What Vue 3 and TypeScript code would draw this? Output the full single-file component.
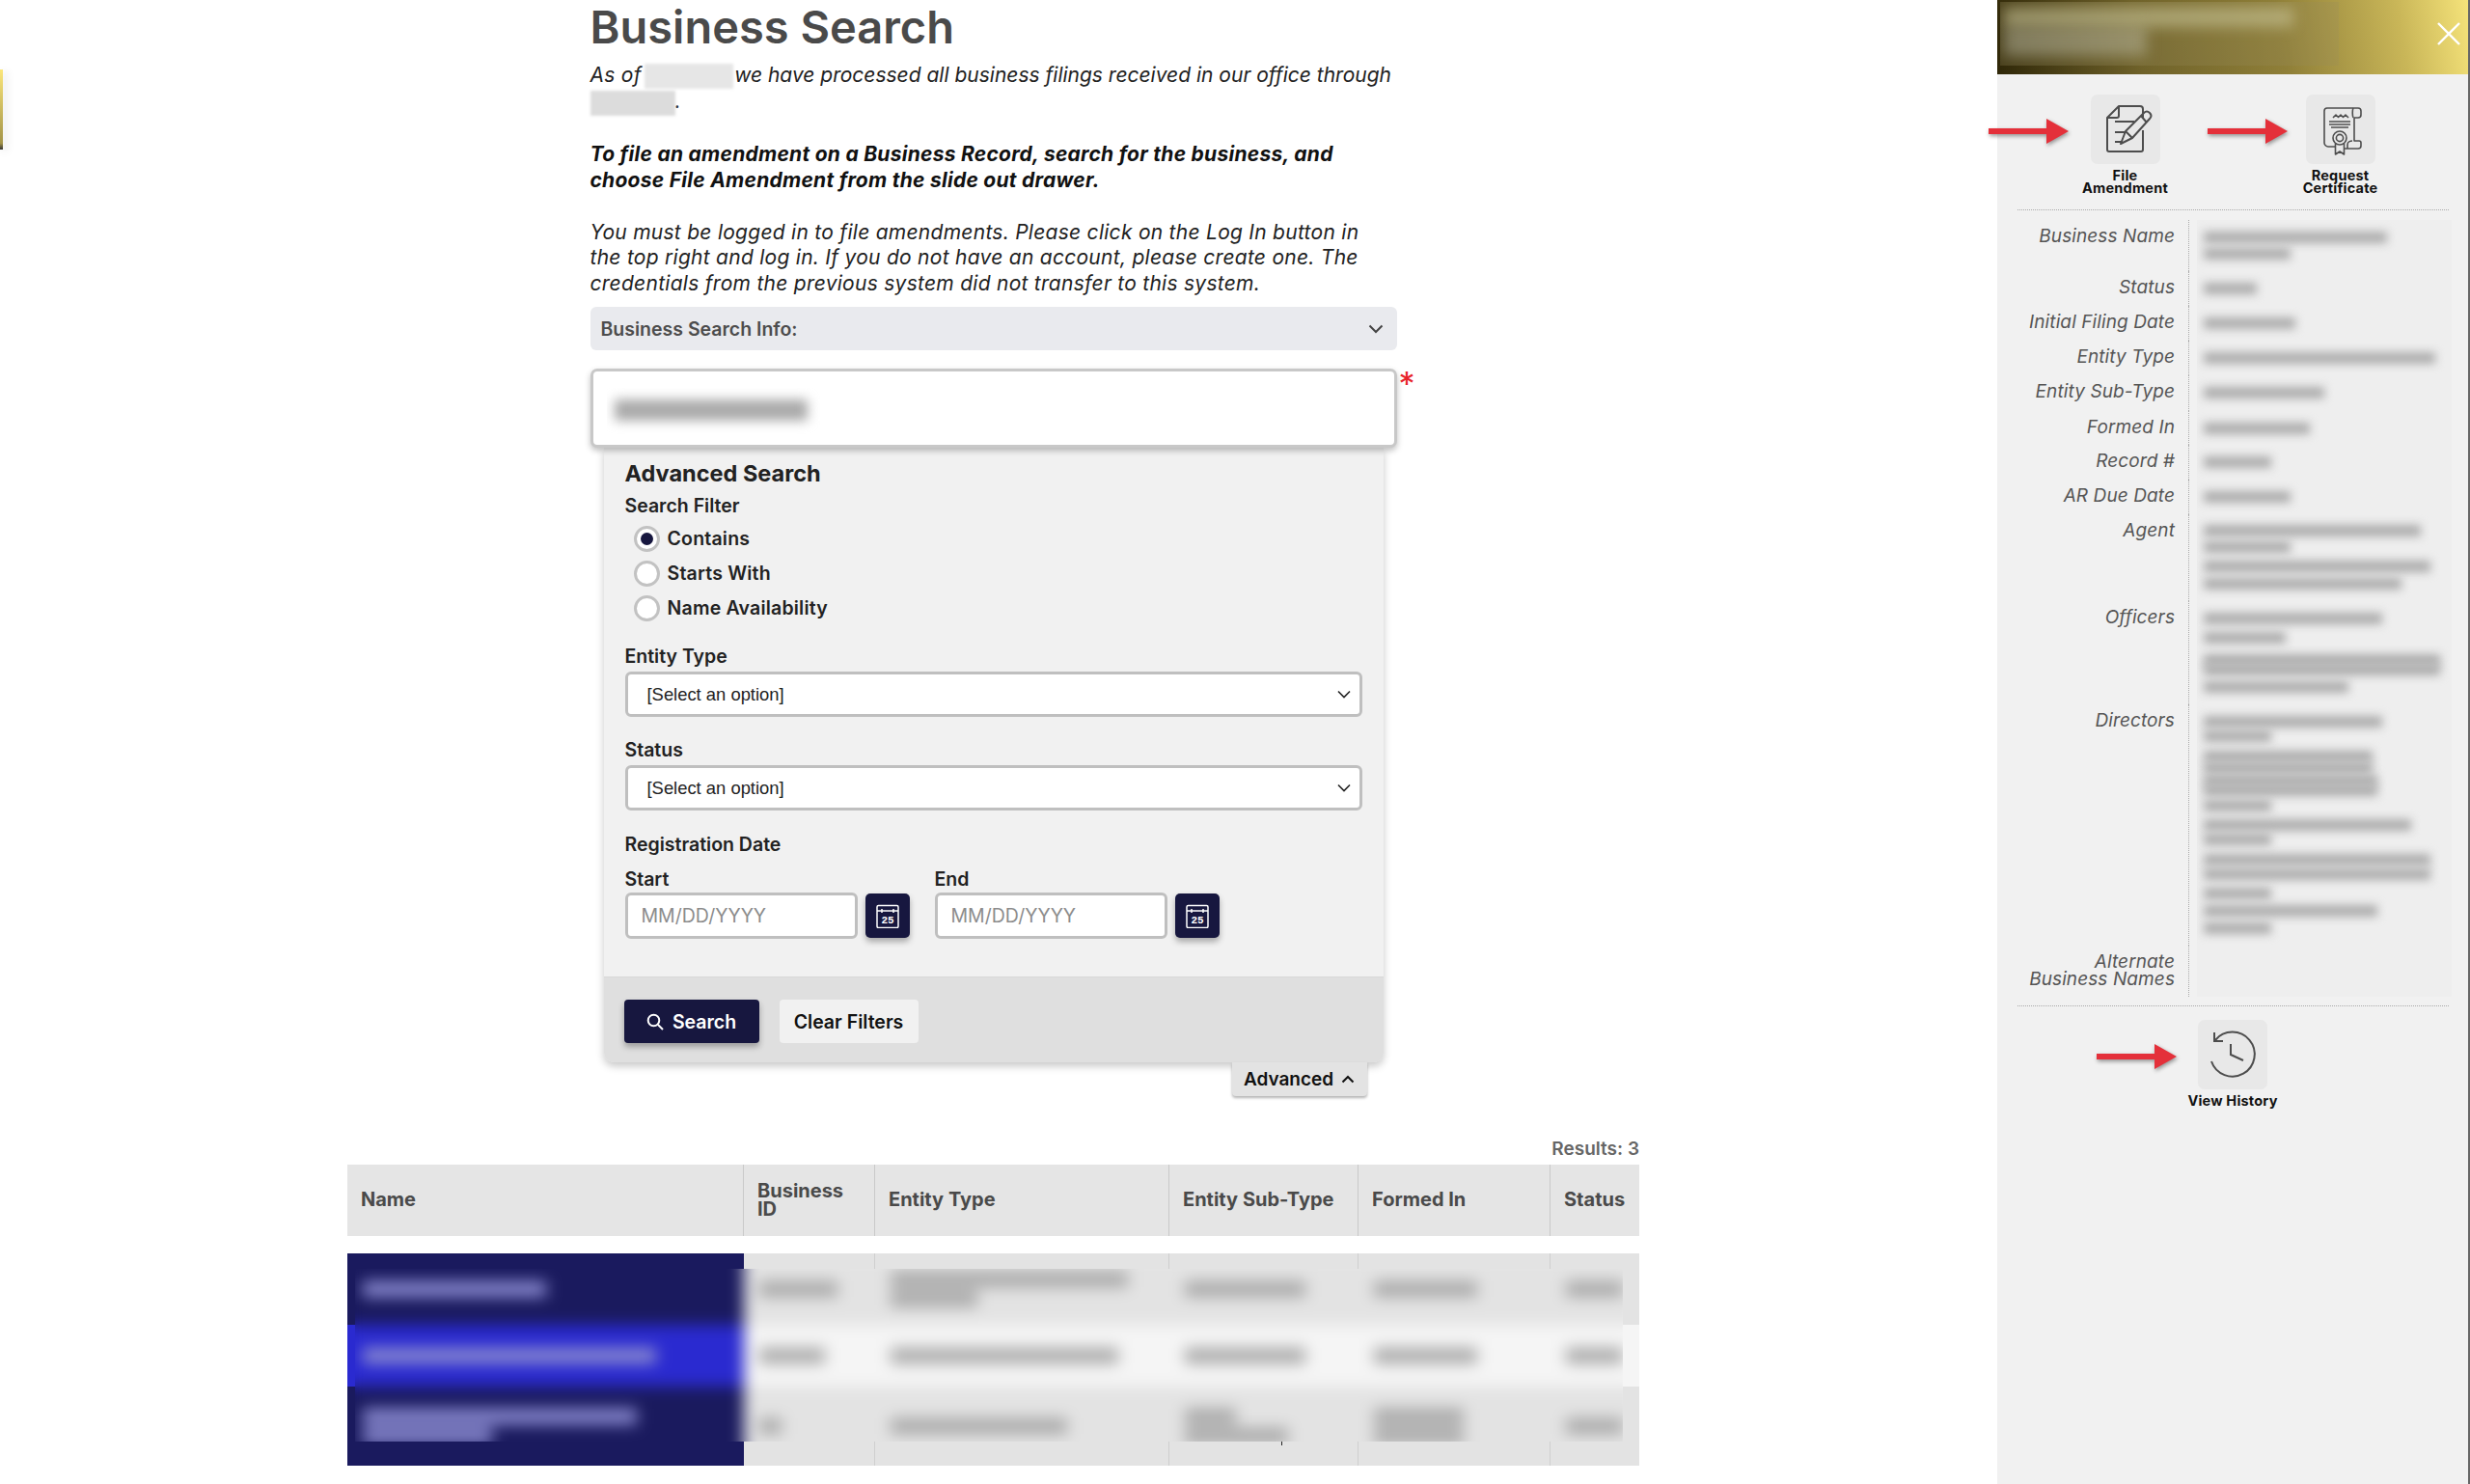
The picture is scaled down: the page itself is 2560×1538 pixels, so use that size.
<script setup lang="ts">
interface Bar { w: number; y: number }
interface Detail { label: string[]; h: number; bars: Bar[] }

const details: Detail[] = [
  { label: ['Business Name'], h: 53, bars: [{ w: 190, y: 18 }, { w: 90, y: 35 }] },
  { label: ['Status'], h: 36, bars: [{ w: 55, y: 18 }] },
  { label: ['Initial Filing Date'], h: 36, bars: [{ w: 95, y: 18 }] },
  { label: ['Entity Type'], h: 36, bars: [{ w: 240, y: 18 }] },
  { label: ['Entity Sub-Type'], h: 37, bars: [{ w: 125, y: 18 }] },
  { label: ['Formed In'], h: 35, bars: [{ w: 110, y: 18 }] },
  { label: ['Record #'], h: 36, bars: [{ w: 70, y: 18 }] },
  { label: ['AR Due Date'], h: 36, bars: [{ w: 90, y: 18 }] },
  { label: ['Agent'], h: 90, bars: [{ w: 225, y: 17 }, { w: 90, y: 34 }, { w: 235, y: 54 }, { w: 205, y: 72 }] },
  { label: ['Officers'], h: 107, bars: [{ w: 185, y: 18 }, { w: 85, y: 38 }, { w: 245, y: 61 }, { w: 245, y: 71 }, { w: 150, y: 89 }] },
  {
    label: ['Directors'],
    h: 250,
    bars: [
      { w: 185, y: 18 }, { w: 70, y: 33 }, { w: 175, y: 54 }, { w: 175, y: 66 }, { w: 180, y: 79 },
      { w: 180, y: 89 }, { w: 70, y: 105 }, { w: 215, y: 125 }, { w: 70, y: 140 }, { w: 235, y: 161 },
      { w: 235, y: 176 }, { w: 70, y: 196 }, { w: 180, y: 214 }, { w: 70, y: 232 }
    ]
  },
  { label: ['Alternate', 'Business Names'], h: 53, bars: [] }
]

function barStyle(bars: Bar[], i: number) {
  const prevEnd = i === 0 ? 0 : bars[i - 1].y + 6
  return { width: bars[i].w + 'px', marginTop: bars[i].y - 6 - prevEnd + 'px' }
}

const columns = [
  { name: 'Name', w: 411 },
  { name: 'Business ID', w: 136 },
  { name: 'Entity Type', w: 305 },
  { name: 'Entity Sub-Type', w: 196 },
  { name: 'Formed In', w: 199 },
  { name: 'Status', w: 92 }
]

interface Row { h: number; cls: string; cells: number[][] }
const rows: Row[] = [
  { h: 74, cls: 'odd', cells: [[190], [81], [246, 90], [125], [107], [59]] },
  { h: 64, cls: 'even', cells: [[304], [68], [236], [125], [107], [59]] },
  { h: 82, cls: 'odd', cells: [[284, 134], [23], [183], [53, 107], [93, 93], [59]] }
]
</script>

<template>
  <div class="page">
    <div class="sliver"></div>

    <main class="main">
      <section class="intro">
        <h1 class="title">Business Search</h1>
        <p class="para">
          As of <span class="redact r1"></span> <span class="tight">we have processed all business filings received in our office through</span><br />
          <span class="redact r2"></span>.
        </p>
        <p class="para strong">
          To file an amendment on a Business Record, search for the business, and<br />
          choose File Amendment from the slide out drawer.
        </p>
        <p class="para">
          You must be logged in to file amendments. Please click on the Log In button in<br />
          the top right and log in. If you do not have an account, please create one. The<br />
          credentials from the previous system did not transfer to this system.
        </p>
        <div class="accordion">
          <span>Business Search Info:</span>
          <svg class="acc-chev" width="16" height="10" viewBox="0 0 16 10"><path d="M1.500 1.500 8 8l6.500-6.500" fill="none" stroke="#444" stroke-width="2" /></svg>
        </div>
        <div class="search-box">
          <div class="search-blur"><div class="search-bar"></div></div>
          <span class="asterisk">*</span>
        </div>
      </section>

      <section class="panel">
        <div class="panel-body">
          <h2 class="adv-title">Advanced Search</h2>
          <div class="label filter-label">Search Filter</div>
          <div class="radios">
            <div class="radio-row"><span class="radio on"></span>Contains</div>
            <div class="radio-row"><span class="radio"></span>Starts With</div>
            <div class="radio-row"><span class="radio"></span>Name Availability</div>
          </div>
          <div class="label type-label">Entity Type</div>
          <div class="select">
            <span>[Select an option]</span>
            <svg width="14" height="9" viewBox="0 0 14 9"><path d="M1 1.500 7 7.500l6-6" fill="none" stroke="#222" stroke-width="1.600" /></svg>
          </div>
          <div class="label status-label">Status</div>
          <div class="select">
            <span>[Select an option]</span>
            <svg width="14" height="9" viewBox="0 0 14 9"><path d="M1 1.500 7 7.500l6-6" fill="none" stroke="#222" stroke-width="1.600" /></svg>
          </div>
          <div class="label reg-label">Registration Date</div>
          <div class="dates">
            <div v-for="d in ['Start', 'End']" :key="d" class="date">
              <div class="label">{{ d }}</div>
              <div class="date-row">
                <input class="date-input" placeholder="MM/DD/YYYY" />
                <button class="cal-btn" type="button" :aria-label="d + ' date'">
                  <svg width="26" height="26" viewBox="0 0 26 26" fill="none" stroke="#fff" stroke-width="1.500">
                    <rect x="2" y="2.500" width="22" height="23" rx="1.500" />
                    <path d="M2 8h22M7 6v4M19 6v4" />
                    <text x="13" y="21" class="cal-text" text-anchor="middle">25</text>
                  </svg>
                </button>
              </div>
            </div>
          </div>
        </div>
        <div class="panel-foot">
          <button class="btn primary" type="button">
            <svg width="18" height="18" viewBox="0 0 18 18" fill="none" stroke="#fff" stroke-width="2"><circle cx="7.500" cy="7.500" r="5.800" /><path d="m12 12 5 5" /></svg>
            Search
          </button>
          <button class="btn ghost" type="button">Clear Filters</button>
        </div>
      </section>
      <div class="tab-row">
        <div class="adv-tab">
          Advanced
          <svg width="14" height="9" viewBox="0 0 14 9"><path d="M1.500 7.500 7 2l5.500 5.500" fill="none" stroke="#111" stroke-width="2" /></svg>
        </div>
      </div>

      <section class="results">
        <div class="count">Results: 3</div>
        <div class="thead">
          <div v-for="c in columns" :key="c.name" class="th" :style="{ width: c.w + 'px' }">
            <span :class="{ narrow: c.name === 'Business ID' }">{{ c.name }}</span>
          </div>
        </div>
        <div class="tbody">
          <div v-for="(r, i) in rows" :key="i" class="tr" :class="r.cls" :style="{ height: r.h + 'px' }">
            <div v-for="(c, j) in columns" :key="j" class="td" :style="{ width: c.w + 'px' }"></div>
          </div>
          <div class="blur-window">
            <div class="blur-inner">
              <div v-for="(r, i) in rows" :key="i" class="tr" :class="r.cls" :style="{ height: r.h + 'px' }">
                <div v-for="(c, j) in columns" :key="j" class="td blurred-cell" :style="{ width: c.w + 'px' }">
                  <div v-for="(w, k) in r.cells[j]" :key="k" class="cell-bar" :style="{ width: w + 'px' }"></div>
                </div>
              </div>
            </div>
          </div>
          <div class="tick"></div>
        </div>
      </section>
    </main>

    <aside class="drawer">
      <header class="drawer-head">
        <div class="head-blur">
          <div class="head-bar hb1"></div>
          <div class="head-bar hb2"></div>
        </div>
        <svg class="close" width="26" height="26" viewBox="0 0 26 26"><path d="M2 2l22 22M24 2 2 24" stroke="#fff" stroke-width="2.400" fill="none" /></svg>
      </header>

      <div class="actions">
        <div class="action">
          <div class="tile">
            <svg class="arrow a1" width="86" height="30" viewBox="0 0 86 30"><path d="M1 12h60V2l23 13-23 13V18H1z" /></svg>
            <svg width="72" height="72" viewBox="0 0 72 72" fill="none" stroke="#4d4d4d" stroke-width="2" stroke-linejoin="round">
              <path d="M54 37v20a2 2 0 0 1-2 2H19a2 2 0 0 1-2-2V24L29 12h22a3 3 0 0 1 3 3v9" />
              <path d="M17 24h10a2 2 0 0 0 2-2V12" />
              <path d="M25 28h20M25 39h12M25 49h6" />
              <path d="m31 51 5-13 19-19c2-2 4-2 6 0s2 4 0 6L43 45zM36 38l7 7M52 22l6 7" />
            </svg>
          </div>
          <div class="action-label">File<br />Amendment</div>
        </div>
        <div class="action">
          <div class="tile">
            <svg class="arrow a2" width="86" height="30" viewBox="0 0 86 30"><path d="M1 12h60V2l23 13-23 13V18H1z" /></svg>
            <svg width="72" height="72" viewBox="0 0 72 72" fill="none" stroke="#4d4d4d" stroke-width="1.600" stroke-linejoin="round">
              <path d="M30 54h-7c-2 0-4-2-4-4V17c0-2 1-3 3-3h32c2 0 3 1 3 3v4c0 2-1 3-3 3h-4v24h5c1 0 2 1 2 2v3c0 2-1 3-3 3H40" />
              <path d="M49 14c-1 2-1 8 0 10M48 48c-2 0-5 1-5 4v4" />
              <path d="m28 24 3-3 2.500 2.500L36 21l2.500 2.500L41 21l3 3" />
              <path d="M24 28h22M24 31h22M26 34h18" />
              <circle cx="35" cy="45" r="7" /><circle cx="35" cy="45" r="3.600" />
              <path d="M30.500 51v11l4.500-3 4.500 3V51" />
            </svg>
          </div>
          <div class="action-label">Request<br />Certificate</div>
        </div>
      </div>

      <div class="rule"></div>

      <div class="details">
        <div v-for="d in details" :key="d.label[0]" class="detail" :style="{ height: d.h + 'px' }">
          <div class="detail-label">
            <template v-for="(l, i) in d.label" :key="l"><br v-if="i > 0" />{{ l }}</template>
          </div>
          <div class="detail-value">
            <div v-for="(b, i) in d.bars" :key="i" class="value-bar" :style="barStyle(d.bars, i)"></div>
          </div>
        </div>
      </div>

      <div class="rule history-rule"></div>

      <div class="history">
        <div class="tile">
          <svg class="arrow a3" width="86" height="30" viewBox="0 0 86 30"><path d="M1 12h60V2l23 13-23 13V18H1z" /></svg>
          <svg width="72" height="72" viewBox="0 0 72 72" fill="none" stroke="#4d4d4d" stroke-width="2">
            <path d="M18 21a23 23 0 1 1-4 22" />
            <path d="M17 13v9h9" />
            <path d="M34 25v11l13 6" />
          </svg>
        </div>
        <div class="action-label single">View History</div>
      </div>
    </aside>
  </div>
</template>

<style>
html, body { margin: 0; background: #fff; }
</style>

<style scoped>
* { box-sizing: border-box; }
.page {
  position: relative;
  display: flex;
  width: 2560px;
  height: 1538px;
  overflow: hidden;
  background: #fff;
  font-family: Inter, "Noto Sans", sans-serif;
  color: #222;
}
.sliver {
  position: absolute;
  left: 0;
  top: 72px;
  width: 3px;
  height: 83px;
  background: linear-gradient(#fbe67a, #a39448 92%, #333);
  box-shadow: 3px 2px 8px rgba(0, 0, 0, .15);
}
.main {
  width: 2059px;
  display: flex;
  flex-direction: column;
  align-items: center;
}
.intro { width: 836px; }
.title {
  margin: 0 0 9px;
  font-size: 47px;
  line-height: 56px;
  font-weight: 600;
  color: #4a4a4a;
}
.para {
  margin: 0 0 27.500px;
  font-size: 21px;
  line-height: 26.500px;
  letter-spacing: .27px;
  font-style: italic;
  white-space: nowrap;
  color: #222;
}
.tight { letter-spacing: 0; }
.para:nth-of-type(3) { margin-bottom: 11px; }
.strong { font-weight: 700; color: #111; }
.redact {
  display: inline-block;
  height: 26px;
  vertical-align: middle;
  background: #e6e6e6;
  filter: blur(1.500px);
}
.r1 { width: 92px; margin: 0 -5px 0 -3px; }
.r2 { width: 88px; background: #dcdcdc; }
.accordion {
  display: flex;
  align-items: center;
  justify-content: space-between;
  height: 45px;
  padding: 0 14px 0 11px;
  background: #e9eaee;
  border-radius: 6px;
  font-size: 19.500px;
  font-weight: 600;
  color: #4d4d4d;
}
.search-box {
  position: relative;
  height: 82px;
  margin-top: 19px;
  background: #fff;
  border: 3px solid #c8c8c8;
  border-radius: 7px;
  box-shadow: 0 3px 6px rgba(0, 0, 0, .25);
  z-index: 2;
}
.search-blur {
  width: 236px;
  height: 50px;
  margin: 17px 0 0 14px;
  padding: 12px 8px;
  overflow: hidden;
}
.search-bar {
  height: 22px;
  width: 200px;
  background: #aaa;
  filter: blur(6px);
}
.asterisk {
  position: absolute;
  right: -22px;
  top: -7px;
  font-size: 34px;
  line-height: 40px;
  color: #e8232a;
}
.panel {
  width: 808px;
  background: #f1f1f1;
  border-radius: 0 0 10px 10px;
  box-shadow: 0 4px 8px rgba(0, 0, 0, .22);
}
.panel-body {
  height: 548px;
  padding: 14px 22px 0;
}
.adv-title {
  margin: 0;
  font-size: 23.500px;
  line-height: 26px;
  font-weight: 700;
  color: #222;
}
.label {
  font-size: 19.500px;
  line-height: 24px;
  font-weight: 600;
  color: #222;
}
.filter-label { margin-top: 8px; }
.radios { margin: 4px 0 0 9px; }
.radio-row {
  display: flex;
  align-items: center;
  gap: 8px;
  height: 36px;
  font-size: 19.500px;
  letter-spacing: .2px;
  font-weight: 600;
}
.radio {
  position: relative;
  width: 27px;
  height: 27px;
  border: 3px solid #c2c2c2;
  border-radius: 50%;
  background: #fff;
}
.radio.on::after {
  content: "";
  position: absolute;
  left: 4px;
  top: 4px;
  width: 13px;
  height: 13px;
  border-radius: 50%;
  background: #17173f;
}
.type-label { margin: 20px 0 4px; }
.status-label { margin: 22px 0 4px; }
.reg-label { margin-top: 23px; }
.select {
  display: flex;
  align-items: center;
  justify-content: space-between;
  height: 47px;
  padding: 0 9px 0 20px;
  background: #fff;
  border: 3px solid #bfbfbf;
  border-radius: 6px;
  font-family: "Liberation Sans", sans-serif;
  font-size: 18.400px;
  color: #222;
}
.dates {
  display: flex;
  gap: 26px;
  margin-top: 12px;
}
.date-row {
  display: flex;
  align-items: center;
  gap: 8px;
  margin-top: 2px;
}
.date-input {
  width: 241px;
  height: 48px;
  padding: 0 14px;
  border: 3px solid #bfbfbf;
  border-radius: 6px;
  background: #fff;
  font: inherit;
  font-size: 19.500px;
  outline: none;
}
.date-input::placeholder { color: #8c8c8c; opacity: 1; }
.cal-btn {
  display: flex;
  align-items: center;
  justify-content: center;
  width: 46px;
  height: 46px;
  padding: 0;
  border: 0;
  border-radius: 5px;
  background: #17173f;
  box-shadow: 0 4px 6px rgba(0, 0, 0, .3);
}
.cal-text {
  fill: #fff;
  stroke: none;
  font-family: "Liberation Mono", monospace;
  font-size: 11px;
  font-weight: 700;
}
.panel-foot {
  display: flex;
  gap: 21px;
  height: 89px;
  padding: 23px 21px 0;
  background: #dfdfdf;
  border-top: 1px solid #d8d8d8;
  border-radius: 0 0 10px 10px;
}
.btn {
  display: flex;
  align-items: center;
  justify-content: center;
  gap: 9px;
  height: 45px;
  padding: 0;
  border: 0;
  border-radius: 4px;
  font: inherit;
  font-size: 19.500px;
  font-weight: 600;
}
.primary {
  width: 140px;
  background: #17173f;
  color: #fff;
  box-shadow: 0 4px 6px rgba(0, 0, 0, .3);
}
.ghost {
  width: 144px;
  background: #f1f1f1;
  color: #111;
}
.tab-row {
  width: 808px;
  display: flex;
  justify-content: flex-end;
  padding-right: 17px;
}
.adv-tab {
  display: flex;
  align-items: center;
  justify-content: center;
  gap: 8px;
  width: 140px;
  height: 35px;
  background: #e3e3e3;
  border-radius: 0 0 4px 4px;
  box-shadow: 0 2px 3px rgba(0, 0, 0, .3);
  font-size: 19px;
  font-weight: 600;
  color: #111;
}
.results {
  width: 1339px;
  margin-top: 42.500px;
}
.count {
  height: 28px;
  line-height: 24px;
  text-align: right;
  font-size: 19px;
  font-weight: 600;
  color: #666;
}
.thead {
  display: flex;
  height: 74px;
  background: #e5e5e5;
}
.th {
  display: flex;
  align-items: center;
  padding: 0 14px;
  border-right: 1px solid #c9c9c9;
  font-size: 20px;
  line-height: 19px;
  font-weight: 700;
  color: #4a4a4a;
}
.th:last-child { border-right: 0; }
.narrow { width: 90px; }
.tbody {
  position: relative;
  margin-top: 18px;
}
.tr { display: flex; }
.tr.odd .td { background: #e3e3e3; }
.tr.even .td { background: #f5f5f5; }
.tr .td { border-right: 1px solid #cfcfcf; }
.tr .td:last-child { border-right: 0; }
.tr.odd .td:first-child { background: #1a1a5e; border-right: 0; }
.tr.even .td:first-child { background: #2a2ad0; border-right: 0; }
.blur-window {
  position: absolute;
  left: 8px;
  top: 16px;
  right: 17px;
  bottom: 25px;
  overflow: hidden;
}
.blur-inner {
  position: absolute;
  left: -8px;
  top: -16px;
  width: 1339px;
  filter: blur(8px);
}
.blur-inner .td { border-right: 0; }
.blurred-cell {
  display: flex;
  flex-direction: column;
  justify-content: center;
  gap: 4px;
  padding-left: 16px;
}
.cell-bar {
  height: 16px;
  background: #a8a8a8;
}
.td:first-child .cell-bar { background: #8a8ad0; }
.tick {
  position: absolute;
  left: 968px;
  top: 195px;
  width: 1px;
  height: 4px;
  background: #222;
}
.drawer {
  margin-left: auto;
  width: 490px;
  height: 1538px;
  background: #f1f1f1;
  border-right: 2px solid #666;
}
.drawer-head {
  position: relative;
  height: 77px;
  background: linear-gradient(80deg, #2f2708 0%, #6f622a 30%, #8f7f38 60%, #c9b658 85%, #f5e37a 100%);
}
.head-blur {
  position: absolute;
  left: 3px;
  top: 2px;
  width: 351px;
  height: 66px;
  overflow: hidden;
  background: rgba(150, 140, 90, .25);
}
.head-bar {
  position: absolute;
  filter: blur(7px);
}
.hb1 {
  left: 4px;
  top: 6px;
  width: 300px;
  height: 20px;
  background: rgba(200, 195, 150, .6);
}
.hb2 {
  left: 4px;
  top: 26px;
  width: 148px;
  height: 30px;
  background: rgba(190, 190, 170, .45);
}
.close {
  position: absolute;
  right: 7px;
  top: 22px;
}
.actions {
  display: flex;
  padding: 21px 21px 0;
}
.action {
  flex: 1;
  display: flex;
  flex-direction: column;
  align-items: center;
}
.tile {
  position: relative;
  width: 72px;
  height: 72px;
  background: #e8e8e8;
  border-radius: 7px;
}
.tile > svg { display: block; }
.tile > .arrow {
  position: absolute;
  left: -107px;
  top: 23px;
  fill: #e4303a;
  filter: drop-shadow(1px 2px 2px rgba(0, 0, 0, .4));
}
.tile > .a2 { left: -103px; }
.tile > .a3 { left: -106px; }
.action-label {
  margin-top: 5px;
  font-size: 14.500px;
  letter-spacing: .2px;
  line-height: 13px;
  font-weight: 700;
  text-align: center;
  color: #111;
}
.rule {
  height: 0;
  margin: 16px 20px 0 21px;
  border-top: 1px dotted #aaa;
}
.details { margin-top: 10px; }
.detail {
  display: flex;
}
.detail-label {
  width: 178px;
  padding: 8px 14px 0 0;
  border-right: 1px dotted #aaa;
  margin-left: 21px;
  text-align: right;
  font-size: 19px;
  letter-spacing: .1px;
  line-height: 18px;
  font-style: italic;
  color: #555;
}
.detail-value {
  width: 264px;
  margin-left: 8px;
  padding-left: 7px;
  background: #eeeeee;
  overflow: hidden;
}
.value-bar {
  height: 12px;
  background: #adadad;
  filter: blur(5px);
}
.history-rule { margin-top: 9px; }
.history {
  display: flex;
  flex-direction: column;
  align-items: center;
  padding-top: 14px;
  margin-left: 5px;
  width: 528px;
}
.history .tile { margin-left: -50px; }
.single { margin: 5px 0 0 -50px; line-height: 14px; }
</style>
